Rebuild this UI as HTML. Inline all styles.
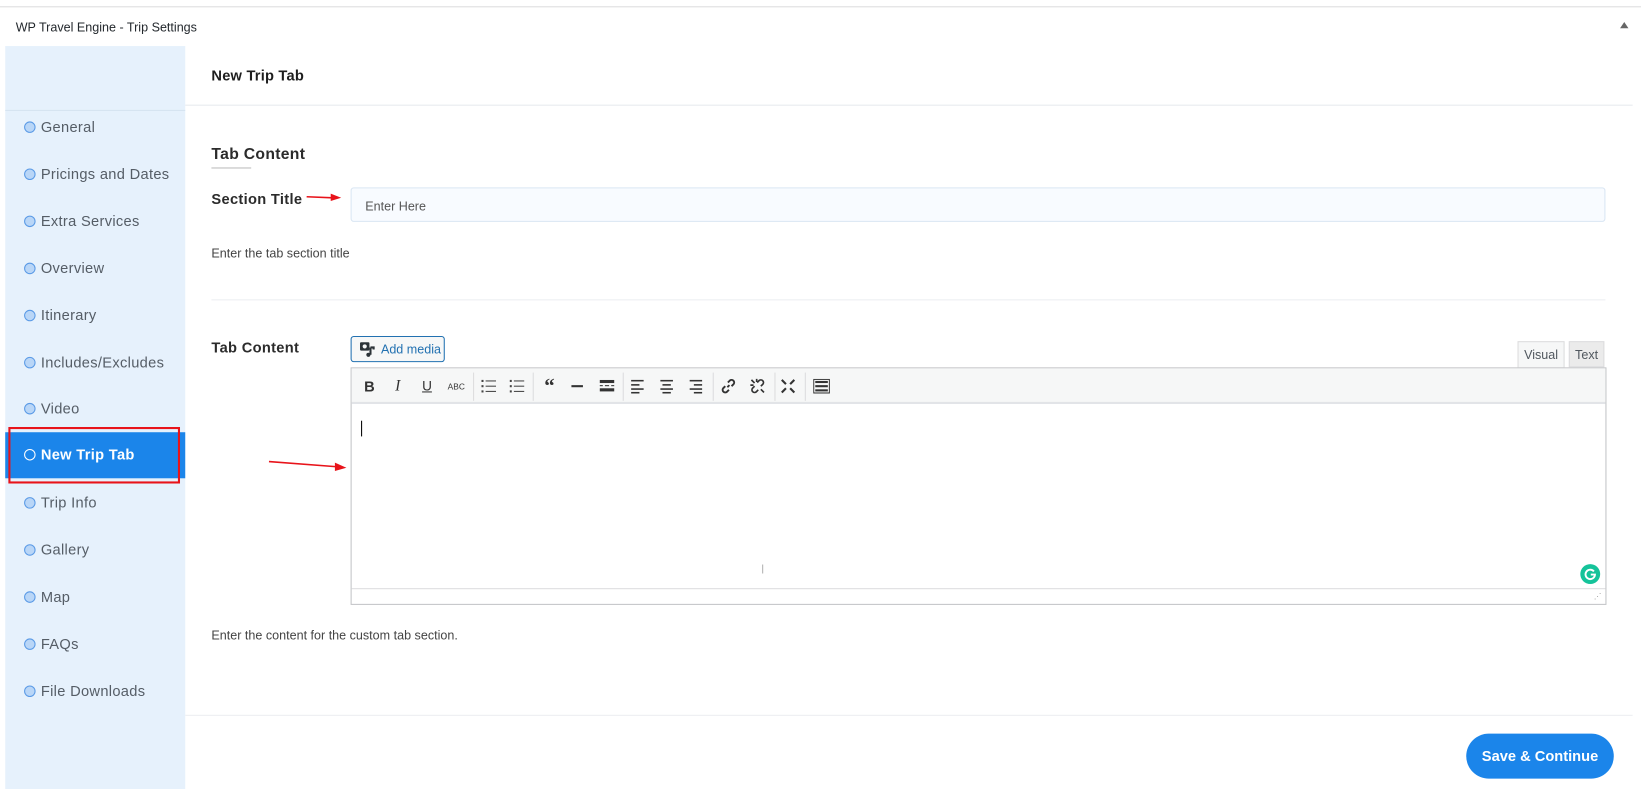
<!DOCTYPE html>
<html><head><meta charset="utf-8">
<style>
*{box-sizing:border-box;margin:0;padding:0}
html,body{width:1641px;height:782px;overflow:hidden;background:#fff}
#w{position:absolute;left:0;top:0;width:1568px;height:748px;transform:scale(1.04656);transform-origin:0 0;font-family:"Liberation Sans",sans-serif;color:#1e1e1e}
.a{position:absolute}
.side{left:5px;top:44px;width:172px;height:710px;background:#e6f1fc}
.item{position:absolute;left:5px;width:172px;height:44px;font-size:14px;color:#555d66;letter-spacing:.3px}
.item span.d{position:absolute;left:18px;top:16px;width:11px;height:11px;border-radius:50%;border:1.5px solid #5a9ae6;background:#b9d6f7}
.item span.t{position:absolute;left:34px;top:13px}
.item.act{background:#1b85ea;color:#fff;font-weight:bold}
.item.act span.d{border-color:#fff;background:transparent}
.lbl{font-size:14px;font-weight:bold;color:#2b2b2b;letter-spacing:.3px}
.small{font-size:12px;color:#444}
.tb{position:absolute;top:9px;font-size:13px;color:#333;text-align:center;width:20px}
.sep{position:absolute;top:4px;width:1px;height:27px;background:#dcdcde}
</style></head><body><div id="w">
<div class="a" style="left:0;top:6px;width:1568px;height:1px;background:#dcdcde"></div>
<div class="a" style="left:15px;top:19px;font-size:12px;color:#23282d">WP Travel Engine - Trip Settings</div>
<div class="a" style="left:1548px;top:21px;width:0;height:0;border-left:4px solid transparent;border-right:4px solid transparent;border-bottom:6px solid #666"></div>
<div class="a side"></div>
<div class="a" style="left:5px;top:105px;width:172px;height:1px;background:#d5e3f0"></div>
<div class="a" style="left:177px;top:100px;width:1383px;height:1px;background:#e6e9ee"></div>
<div class="a" style="left:202px;top:64px;font-size:14px;font-weight:bold;color:#1e1e1e;letter-spacing:.2px">New Trip Tab</div>

<div class="item" style="top:100px"><span class="d"></span><span class="t">General</span></div>
<div class="item" style="top:145px"><span class="d"></span><span class="t">Pricings and Dates</span></div>
<div class="item" style="top:190px"><span class="d"></span><span class="t">Extra Services</span></div>
<div class="item" style="top:235px"><span class="d"></span><span class="t">Overview</span></div>
<div class="item" style="top:280px"><span class="d"></span><span class="t">Itinerary</span></div>
<div class="item" style="top:325px"><span class="d"></span><span class="t">Includes/Excludes</span></div>
<div class="item" style="top:369px"><span class="d"></span><span class="t">Video</span></div>
<div class="item act" style="top:413px"><span class="d"></span><span class="t">New Trip Tab</span></div>
<div class="item" style="top:459px"><span class="d"></span><span class="t">Trip Info</span></div>
<div class="item" style="top:504px"><span class="d"></span><span class="t">Gallery</span></div>
<div class="item" style="top:549px"><span class="d"></span><span class="t">Map</span></div>
<div class="item" style="top:594px"><span class="d"></span><span class="t">FAQs</span></div>
<div class="item" style="top:639px"><span class="d"></span><span class="t">File Downloads</span></div>
<div class="a" style="left:8px;top:408px;width:164px;height:54px;border:2px solid #e8131a"></div>

<div class="a lbl" style="left:202px;top:139px;font-size:15px">Tab Content</div>
<div class="a" style="left:202px;top:160px;width:38px;height:1px;background:#bbb"></div>
<div class="a lbl" style="left:202px;top:182px">Section Title</div>
<svg class="a" style="left:292px;top:184px" width="36" height="10"><line x1="1" y1="4" x2="26" y2="5" stroke="#e8131a" stroke-width="1.5"/><path d="M24 1 L34 5 L24 8Z" fill="#e8131a"/></svg>
<div class="a" style="left:335px;top:179px;width:1199px;height:33px;background:#f8fbff;border:1px solid #d9e6f3;border-radius:3px"></div>
<div class="a" style="left:349px;top:190px;font-size:12px;color:#555">Enter Here</div>
<div class="a small" style="left:202px;top:235px">Enter the tab section title</div>
<div class="a" style="left:202px;top:286px;width:1332px;height:1px;background:#eceef1"></div>

<div class="a lbl" style="left:202px;top:324px">Tab Content</div>
<svg class="a" style="left:256px;top:438px" width="76" height="14"><line x1="1" y1="3" x2="66" y2="8" stroke="#e8131a" stroke-width="1.5"/><path d="M64 4 L75 9 L64 12Z" fill="#e8131a"/></svg>
<div class="a" style="left:335px;top:321px;width:90px;height:25px;border:1px solid #2271b1;border-radius:3px;background:#f6f7f7"></div>
<svg class="a" style="left:343px;top:326px" width="16" height="16"><rect x="1" y="1" width="9" height="8" rx="1" fill="#2c3338"/><circle cx="5.5" cy="5" r="2" fill="#f6f7f7"/><path d="M11 6v7M11 6h3v2" stroke="#2c3338" stroke-width="2" fill="none"/><circle cx="9" cy="13" r="2" fill="#2c3338"/></svg>
<div class="a" style="left:364px;top:327px;font-size:12px;color:#2271b1">Add media</div>
<div class="a" style="left:1450px;top:326px;width:45px;height:26px;border:1px solid #dcdcde;background:#f6f7f7;font-size:12px;color:#50575e;text-align:center;line-height:24px">Visual</div>
<div class="a" style="left:1499px;top:326px;width:34px;height:25px;border:1px solid #dcdcde;background:#ebebeb;font-size:12px;color:#50575e;text-align:center;line-height:24px">Text</div>

<div class="a" style="left:335px;top:351px;width:1200px;height:227px;border:1px solid #c3c4c7;background:#fff"></div>
<div class="a" style="left:336px;top:352px;width:1198px;height:34px;background:#f6f7f7;border-bottom:2px solid #e2e4e7">
 <div class="tb" style="left:7px;font-weight:bold;font-size:14px">B</div>
 <div class="tb" style="left:34px;font-style:italic;font-family:'Liberation Serif';font-size:15px">I</div>
 <div class="tb" style="left:62px;text-decoration:underline">U</div>
 <div class="tb" style="left:90px;font-size:8px;top:13px">ABC</div>
 <div class="sep" style="left:116px"></div>
 <svg class="a" style="left:124px;top:10px" width="14" height="14"><g fill="#444"><rect x="0" y="1" width="2" height="2"/><rect x="0" y="6" width="2" height="2"/><rect x="0" y="11" width="2" height="2"/><rect x="4" y="1.5" width="10" height="1"/><rect x="4" y="6.5" width="10" height="1"/><rect x="4" y="11.5" width="10" height="1"/></g></svg>
 <svg class="a" style="left:151px;top:10px" width="14" height="14"><g fill="#444"><rect x="0" y="1" width="2" height="2"/><rect x="0" y="6" width="2" height="2"/><rect x="0" y="11" width="2" height="2"/><rect x="4" y="1.5" width="10" height="1"/><rect x="4" y="6.5" width="10" height="1"/><rect x="4" y="11.5" width="10" height="1"/></g></svg>
 <div class="sep" style="left:173px"></div>
 <div class="tb" style="left:179px;font-weight:bold;font-size:20px;top:6px;font-family:'Liberation Serif'">&#8220;</div>
 <div class="a" style="left:210px;top:16px;width:11px;height:2px;background:#333"></div>
 <svg class="a" style="left:237px;top:11px" width="14" height="12"><rect x="0" y="0" width="14" height="3" fill="#333"/><rect x="0" y="5" width="3" height="1" fill="#333"/><rect x="5" y="5" width="4" height="1" fill="#333"/><rect x="11" y="5" width="3" height="1" fill="#333"/><rect x="0" y="8" width="14" height="3" fill="#333"/></svg>
 <div class="sep" style="left:259px"></div>
 <svg class="a" style="left:267px;top:10px" width="14" height="14"><g fill="#333"><rect y="1" width="12" height="1.5"/><rect y="5" width="8" height="1.5"/><rect y="9" width="12" height="1.5"/><rect y="12.5" width="8" height="1.5"/></g></svg>
 <svg class="a" style="left:294px;top:10px" width="14" height="14"><g fill="#333"><rect x="1" y="1" width="12" height="1.5"/><rect x="3" y="5" width="8" height="1.5"/><rect x="1" y="9" width="12" height="1.5"/><rect x="3" y="12.5" width="8" height="1.5"/></g></svg>
 <svg class="a" style="left:321px;top:10px" width="14" height="14"><g fill="#333"><rect x="2" y="1" width="12" height="1.5"/><rect x="6" y="5" width="8" height="1.5"/><rect x="2" y="9" width="12" height="1.5"/><rect x="6" y="12.5" width="8" height="1.5"/></g></svg>
 <div class="sep" style="left:345px"></div>
 <svg class="a" style="left:352px;top:9px" width="16" height="16"><path d="M7 9 L9 7 M5 8 L3 10 a2.5 2.5 0 0 0 3.5 3.5 L8.5 11.5 M11 8 L13 6 a2.5 2.5 0 0 0 -3.5 -3.5 L7.5 4.5" stroke="#333" stroke-width="1.8" fill="none"/></svg>
 <svg class="a" style="left:380px;top:9px" width="16" height="16"><path d="M5 8 L3 10 a2.5 2.5 0 0 0 3.5 3.5 L8.5 11.5 M11 8 L13 6 a2.5 2.5 0 0 0 -3.5 -3.5 L7.5 4.5 M2 2l3 3M14 14l-3-3M7 1v3M1 7h3" stroke="#333" stroke-width="1.6" fill="none"/></svg>
 <div class="sep" style="left:404px"></div>
 <svg class="a" style="left:410px;top:10px" width="14" height="14"><path d="M1 1l4 4M13 1l-4 4M1 13l4-4M13 13l-4-4" stroke="#333" stroke-width="2"/></svg>
 <div class="sep" style="left:433px"></div>
 <svg class="a" style="left:441px;top:10px" width="16" height="14"><rect x="0.5" y="0.5" width="15" height="13" fill="none" stroke="#333"/><g fill="#333"><rect x="2" y="2" width="12" height="2"/><rect x="2" y="6" width="12" height="2"/><rect x="2" y="10" width="12" height="2"/></g></svg>
</div>
<div class="a" style="left:345px;top:402px;width:1px;height:15px;background:#000"></div>
<div class="a" style="left:727px;top:537px;font-size:12px;color:#bbb">I</div>
<div class="a" style="left:1510px;top:539px;width:19px;height:19px;border-radius:50%;background:#15c39a"></div>
<svg class="a" style="left:1513px;top:542px" width="13" height="13"><path d="M10 4 A4.5 4.5 0 1 0 11 7 H7" stroke="#fff" stroke-width="1.8" fill="none"/></svg>
<div class="a" style="left:336px;top:562px;width:1198px;height:1px;background:#dcdcde"></div>
<div class="a" style="left:1523px;top:566px;font-size:7px;color:#999">⋰</div>
<div class="a small" style="left:202px;top:600px">Enter the content for the custom tab section.</div>

<div class="a" style="left:177px;top:683px;width:1383px;height:1px;background:#eceef1"></div>
<div class="a" style="left:1401px;top:701px;width:141px;height:43px;border-radius:22px;background:#1b85ea;color:#fff;font-weight:bold;font-size:14px;text-align:center;line-height:43px">Save &amp; Continue</div>
</div></body></html>
